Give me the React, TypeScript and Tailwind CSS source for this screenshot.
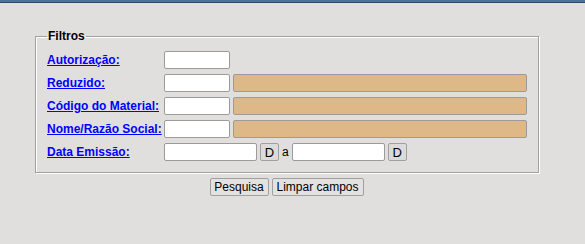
const rows = [
  { label: 'Autorização:', wide: false },
  { label: 'Reduzido:', wide: true },
  { label: 'Código do Material:', wide: true },
  { label: 'Nome/Razão Social:', wide: true },
];

export default function App() {
  return (
    <div className="min-h-[244px] bg-[#e0dfdd] font-['Liberation_Sans',Arial,sans-serif] text-black">
      <div className="h-[3px] border-b border-[#2f4b69] bg-[#4b739b]" />
      <div className="pt-[26px] pl-[35px]">
        <fieldset className="m-0 w-[503px] border border-[#a0a0a0] pt-[8px] pr-[11px] pb-[11px] pl-[11px] shadow-[inset_1px_1px_0_#fff,1px_1px_0_#fff]">
          <legend className="px-[1px] text-[12px] leading-[14px] font-bold">Filtros</legend>
          <div className="flex flex-col gap-[5px]">
            {rows.map((r) => (
              <div key={r.label} className="flex h-[18px] items-center">
                <a href="#" className="w-[117px] text-[12px] font-bold text-[#0000ff] underline">
                  {r.label}
                </a>
                <TextInput className="w-[66px] bg-white" />
                {r.wide && <TextInput className="ml-[3px] w-[294px] bg-[#deb887]" />}
              </div>
            ))}
            <div className="flex h-[18px] items-center">
              <a href="#" className="w-[117px] text-[12px] font-bold text-[#0000ff] underline">
                Data Emissão:
              </a>
              <TextInput className="w-[93px] bg-white" />
              <SmallButton>D</SmallButton>
              <span className="ml-[3px] mr-[3px] text-[12px]">a</span>
              <TextInput className="w-[93px] bg-white" />
              <SmallButton>D</SmallButton>
            </div>
          </div>
        </fieldset>
        <div className="mt-[5px] flex w-[503px] justify-center gap-[3px]">
          <button className="h-[18px] w-[59px] rounded-[2px] border border-[#a0a0a0] bg-[#e3e2e0] text-[12px] leading-none">
            Pesquisa
          </button>
          <button className="h-[18px] w-[92px] rounded-[2px] border border-[#a0a0a0] bg-[#e3e2e0] text-[12px] leading-none">
            Limpar campos
          </button>
        </div>
      </div>
    </div>
  );
}

function TextInput({ className }: { className: string }) {
  return (
    <input
      type="text"
      className={`h-[18px] rounded-[2px] border border-[#9b9b9b] text-[12px] outline-none ${className}`}
    />
  );
}

function SmallButton({ children }: { children: string }) {
  return (
    <button className="ml-[3px] h-[18px] w-[19px] rounded-[2px] border border-[#a0a0a0] bg-[#dcdbd9] text-[13px] leading-none">
      {children}
    </button>
  );
}
